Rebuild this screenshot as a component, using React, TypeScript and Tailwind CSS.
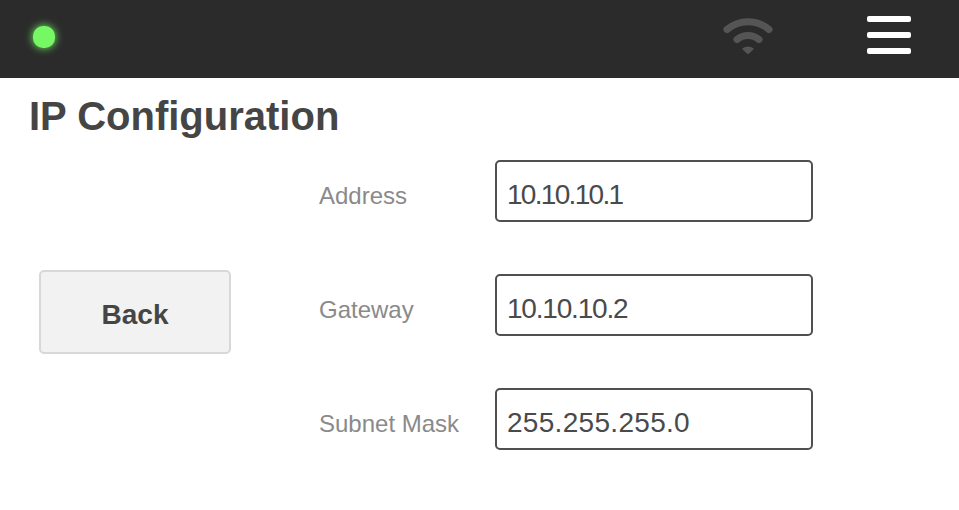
export default function App() {
  const fields = [
    ["Address", "10.10.10.1", "tracking-[-1.7px]"],
    ["Gateway", "10.10.10.2", "tracking-[-1.2px]"],
    ["Subnet Mask", "255.255.255.0", "tracking-[0.3px]"],
  ];
  return (
    <div className="w-[959px] h-[510px] bg-white overflow-hidden font-['Liberation_Sans',Arial,sans-serif]">
      <header className="h-[78px] bg-[#2b2b2b] flex items-start justify-between pl-[33px] pr-[48px]">
        <div className="mt-[26px] w-[22px] h-[22px] rounded-[10px] bg-[#76f865] shadow-[0_0_8px_#76f865]" />
        <div className="flex items-start gap-[93px]">
          <svg className="mt-[17px]" width="52" height="38" viewBox="0 0 52 38" fill="none" stroke="#555555" strokeWidth="7" strokeLinecap="round">
            <path d="M5 12.5 A32 32 0 0 1 47 12.5" />
            <path d="M15 22.5 A17 17 0 0 1 37 22.5" />
            <path d="M21 32 A8 8 0 0 1 31 32 L26 36.5 Z" fill="#555555" stroke="#555555" strokeWidth="1.5" strokeLinejoin="round" />
          </svg>
          <div className="mt-[16px] flex flex-col gap-[10px]">
            <div className="w-[44px] h-[6px] rounded-[2px] bg-white" />
            <div className="w-[44px] h-[6px] rounded-[2px] bg-white" />
            <div className="w-[44px] h-[6px] rounded-[2px] bg-white" />
          </div>
        </div>
      </header>
      <h1 className="text-[40px] leading-[44px] font-bold text-[#454545] pl-[29px] pt-[16px]">IP Configuration</h1>
      <div className="flex pt-[22px]">
        <div className="w-[319px] pl-[39px] pt-[14px] flex items-center">
          <button className="w-[192px] h-[84px] bg-[#f2f2f2] border-2 border-[#d8d8d8] rounded-[5px] pt-[6px] text-[28px] font-bold text-[#454545]">Back</button>
        </div>
        <div className="flex flex-col gap-[52px]">
          {fields.map(([label, value, track]) => (
            <div key={label} className="flex items-center h-[62px]">
              <label className="w-[176px] pt-[10px] text-[24px] text-[#8a8a8a]">{label}</label>
              <div className={`w-[318px] h-[62px] border-2 border-[#505050] rounded-[5px] pl-[10px] pt-[8px] flex items-center text-[28px] text-[#4a4a4a] ${track}`}>{value}</div>
            </div>
          ))}
        </div>
      </div>
    </div>
  );
}
